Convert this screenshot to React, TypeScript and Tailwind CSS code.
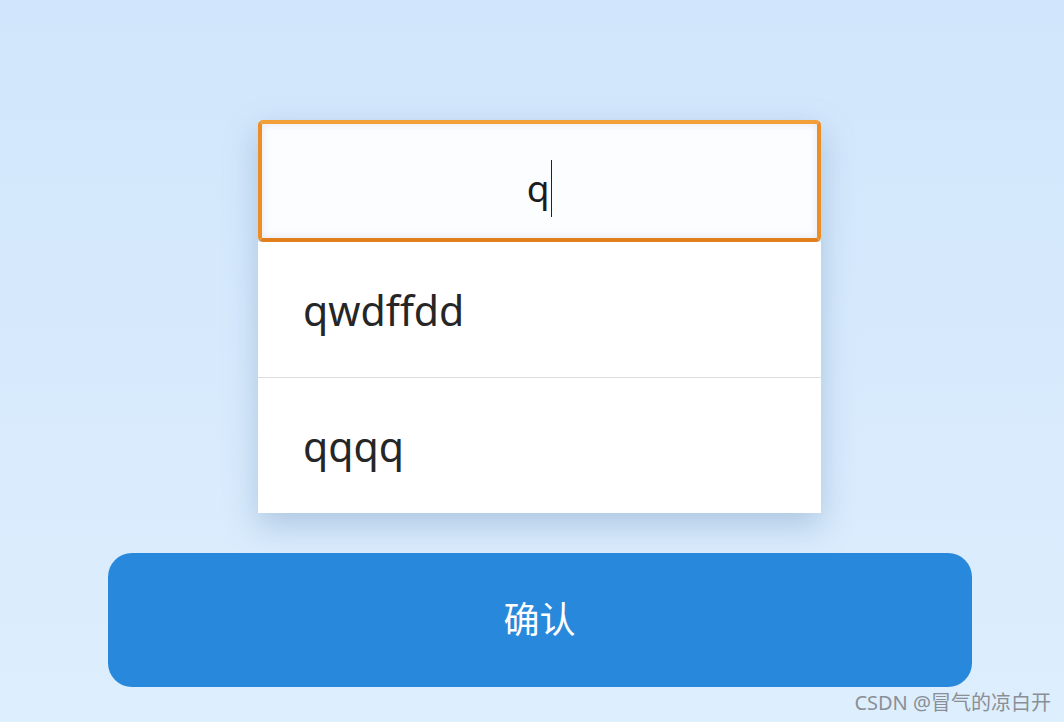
import React from "react";

export default function App() {
  return (
    <div
      className="relative w-[1064px] h-[722px] overflow-hidden bg-gradient-to-b from-[#d1e6fc] to-[#ddeefd]"
      style={{ fontFamily: '"Noto Sans", "Noto Sans CJK SC", sans-serif' }}
    >
      <div className="flex flex-col items-center pt-[120px] pl-[15px]">
        <div className="w-[563px] shadow-[0_12px_30px_rgba(90,130,175,0.35)]">
          <div className="h-[122px] rounded-[5px] border-[4px] border-[#ec8e24] border-t-[#f39f38] border-b-[#e07f1c] bg-[#fcfdff] shadow-[inset_0_0_8px_rgba(180,190,210,0.35)] flex items-center justify-center">
            <div className="flex items-start pt-[14px]">
              <span className="text-[37px] leading-[56px] text-[#1c1c1c]">q</span>
              <span className="w-[1.5px] h-[57px] bg-[#222] ml-[1px]" />
            </div>
          </div>
          <div className="bg-white">
            <div className="h-[136px] flex items-center pl-[45px] border-b border-[#dcdde0]">
              <span className="text-[41px] text-[#262626] leading-none pt-[2px]">qwdffdd</span>
            </div>
            <div className="h-[135px] flex items-center pl-[45px]">
              <span className="text-[41px] text-[#262626] leading-none pt-[2px]">qqqq</span>
            </div>
          </div>
        </div>
        <button className="mt-[40px] w-[864px] h-[134px] rounded-[24px] bg-[#2889dc] text-white text-[36px] flex items-center justify-center">
          确认
        </button>
      </div>
      <div className="absolute right-[13px] bottom-[9px] text-[20px] text-[#8a8f96] leading-none">
        CSDN @冒气的凉白开
      </div>
    </div>
  );
}
